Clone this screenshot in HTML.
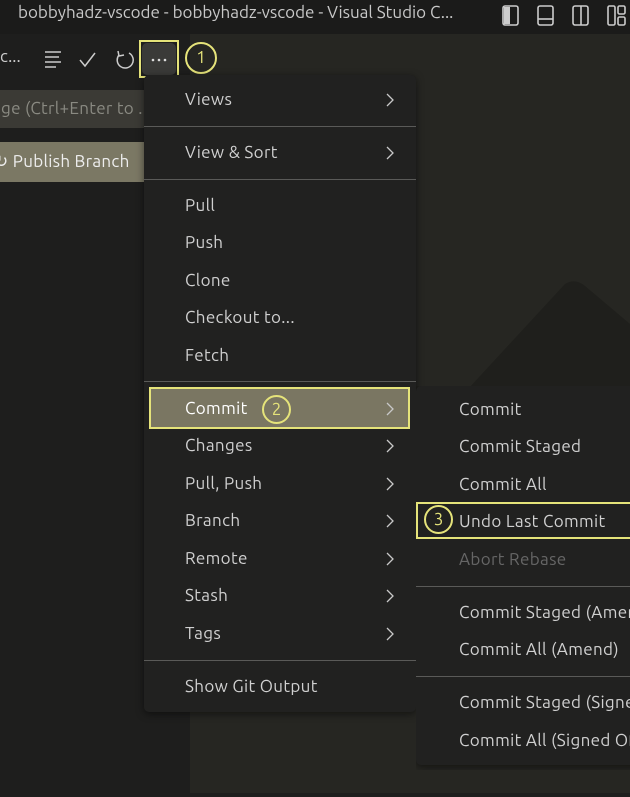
<!DOCTYPE html>
<html><head><meta charset="utf-8"><style>
*{margin:0;padding:0;box-sizing:border-box}
body{width:630px;height:793px;overflow:hidden;background:#1e1e1d;font-family:"Ubuntu","DejaVu Sans","Liberation Sans",sans-serif;color:#d4d4d4;position:relative}
.abs{position:absolute}
.title{left:0;top:0;width:630px;height:34px;background:#1b1b1a;overflow:hidden}
.title span{position:absolute;left:18px;top:3px;font-size:17px;color:#c8c8c8;letter-spacing:0}
.side{left:0;top:34px;width:190px;height:759px;background:#1e1e1d}
.editor{left:190px;top:34px;width:440px;height:759px;background:#262622}
.menu{background:#212120;border-radius:5px;box-shadow:0 2px 8px rgba(0,0,0,.5)}
.it{position:absolute;font-size:17px;color:#d0d0d0;white-space:nowrap;letter-spacing:0.35px}
.chev{position:absolute;left:242px;width:8px;height:14px}
.sep{position:absolute;height:1px;background:#5a5a58}
.circ{position:absolute;border:2px solid #e5e37a;border-radius:50%;color:#e5e37a;text-align:center;font-size:17px}
</style></head><body>
<div class="abs title"><span>bobbyhadz-vscode - bobbyhadz-vscode - Visual Studio C...</span>
<svg class="abs" style="left:500px;top:4px" width="130" height="24" fill="none" stroke="#ccc" stroke-width="1.6">
<rect x="3" y="2" width="15" height="19" rx="2"/><rect x="4" y="3" width="6" height="17" fill="#ccc" stroke="none"/>
<rect x="38" y="2" width="15" height="19" rx="2"/><line x1="38" y1="15" x2="53" y2="15"/>
<rect x="73" y="2" width="15" height="19" rx="2"/><line x1="81" y1="2" x2="81" y2="21"/>
<rect x="108" y="2" width="7" height="19" rx="1.5"/><rect x="118" y="2" width="7" height="8" rx="1.5"/><rect x="118" y="13" width="7" height="8" rx="1.5"/>
</svg></div>
<div class="abs side"></div>
<div class="abs editor">
<svg width="440" height="759"><path d="M255 380 L375 250 Q385 244 395 252 L440 290 L440 380 Z" fill="#1f1f1c"/></svg>
</div>
<div class="abs" style="left:0;top:47px;font-size:17px;color:#ccc">c...</div>
<svg class="abs" style="left:42px;top:48px" width="100" height="22" fill="none" stroke="#ccc" stroke-width="1.5">
<line x1="3" y1="4" x2="19" y2="4"/><line x1="3" y1="9" x2="17" y2="9"/><line x1="3" y1="14" x2="19" y2="14"/><line x1="3" y1="19" x2="14" y2="19"/>
<path d="M38 12 L43 18 L53 5"/>
<path d="M87 5 A8 8 0 1 1 77 7 M76 3 L77 8 L82 7"/>
</svg>
<div class="abs" style="left:139px;top:40px;width:40px;height:38px;border:2px solid #e5e37a"></div>
<div class="abs" style="left:142px;top:43px;width:34px;height:32px;background:#3a3a38;border-radius:5px"></div>
<svg class="abs" style="left:142px;top:43px" width="34" height="32" fill="#ddd"><circle cx="11" cy="17" r="1.3"/><circle cx="17" cy="17" r="1.3"/><circle cx="23" cy="17" r="1.3"/></svg>
<div class="circ" style="left:185px;top:42px;width:32px;height:32px;line-height:27px">1</div>
<div class="abs" style="left:0;top:90px;width:144px;height:38px;background:#3b3a35;color:#8a8a82;font-size:17px;line-height:38px;white-space:nowrap;overflow:hidden;text-indent:-8px;letter-spacing:0.3px">age (Ctrl+Enter to .</div>
<div class="abs" style="left:0;top:142px;width:144px;height:40px;background:#7b7864;color:#eee;font-size:17px;line-height:40px;white-space:nowrap;overflow:hidden;text-indent:-6px;letter-spacing:0.3px">&#x21bb; Publish Branch</div>

<svg width="0" height="0" style="position:absolute"><defs><symbol id="cv" viewBox="0 0 8 14"><path d="M1 1 L7 7 L1 13" fill="none" stroke="#c8c8c8" stroke-width="1.3"/></symbol></defs></svg>

<div class="abs menu" style="left:144px;top:75px;width:272px;height:637px">
<div class="it" style="left:41px;top:15px">Views</div><svg class="chev" style="top:18px"><use href="#cv"/></svg>
<div class="sep" style="left:0;width:272px;top:51px"></div>
<div class="it" style="left:41px;top:68px">View &amp; Sort</div><svg class="chev" style="top:71px"><use href="#cv"/></svg>
<div class="sep" style="left:0;width:272px;top:104px"></div>
<div class="it" style="left:41px;top:121px">Pull</div>
<div class="it" style="left:41px;top:158px">Push</div>
<div class="it" style="left:41px;top:196px">Clone</div>
<div class="it" style="left:41px;top:233px">Checkout to...</div>
<div class="it" style="left:41px;top:271px">Fetch</div>
<div class="sep" style="left:0;width:272px;top:306px"></div>
<div class="abs" style="left:5px;top:312px;width:261px;height:42px;background:#7a7662;border:2px solid #e5e37a"></div>
<div class="it" style="left:41px;top:324px;color:#fff">Commit</div><svg class="chev" style="top:327px"><use href="#cv"/></svg>
<div class="circ" style="left:118px;top:320px;width:29px;height:29px;line-height:25px">2</div>
<div class="it" style="left:41px;top:361px">Changes</div><svg class="chev" style="top:364px"><use href="#cv"/></svg>
<div class="it" style="left:41px;top:399px">Pull, Push</div><svg class="chev" style="top:402px"><use href="#cv"/></svg>
<div class="it" style="left:41px;top:436px">Branch</div><svg class="chev" style="top:439px"><use href="#cv"/></svg>
<div class="it" style="left:41px;top:474px">Remote</div><svg class="chev" style="top:477px"><use href="#cv"/></svg>
<div class="it" style="left:41px;top:511px">Stash</div><svg class="chev" style="top:514px"><use href="#cv"/></svg>
<div class="it" style="left:41px;top:549px">Tags</div><svg class="chev" style="top:552px"><use href="#cv"/></svg>
<div class="sep" style="left:0;width:272px;top:585px"></div>
<div class="it" style="left:41px;top:602px">Show Git Output</div>
</div>

<div class="abs" style="left:416px;top:386px;width:214px;height:384px;overflow:hidden">
<div class="abs menu" style="left:0;top:0;width:230px;height:379px">
<div class="it" style="left:43px;top:14px">Commit</div>
<div class="it" style="left:43px;top:51px">Commit Staged</div>
<div class="it" style="left:43px;top:89px">Commit All</div>
<div class="abs" style="left:0;top:116px;width:230px;height:37px;border:2px solid #e5e37a"></div>
<div class="circ" style="left:8px;top:119px;width:29px;height:29px;line-height:25px">3</div>
<div class="it" style="left:43px;top:126px">Undo Last Commit</div>
<div class="it" style="left:43px;top:164px;color:#666">Abort Rebase</div>
<div class="sep" style="left:0;width:230px;top:200px"></div>
<div class="it" style="left:43px;top:217px">Commit Staged (Amend)</div>
<div class="it" style="left:43px;top:254px">Commit All (Amend)</div>
<div class="sep" style="left:0;width:230px;top:290px"></div>
<div class="it" style="left:43px;top:307px">Commit Staged (Signed Off)</div>
<div class="it" style="left:43px;top:345px">Commit All (Signed Off)</div>
</div></div>
</body></html>
